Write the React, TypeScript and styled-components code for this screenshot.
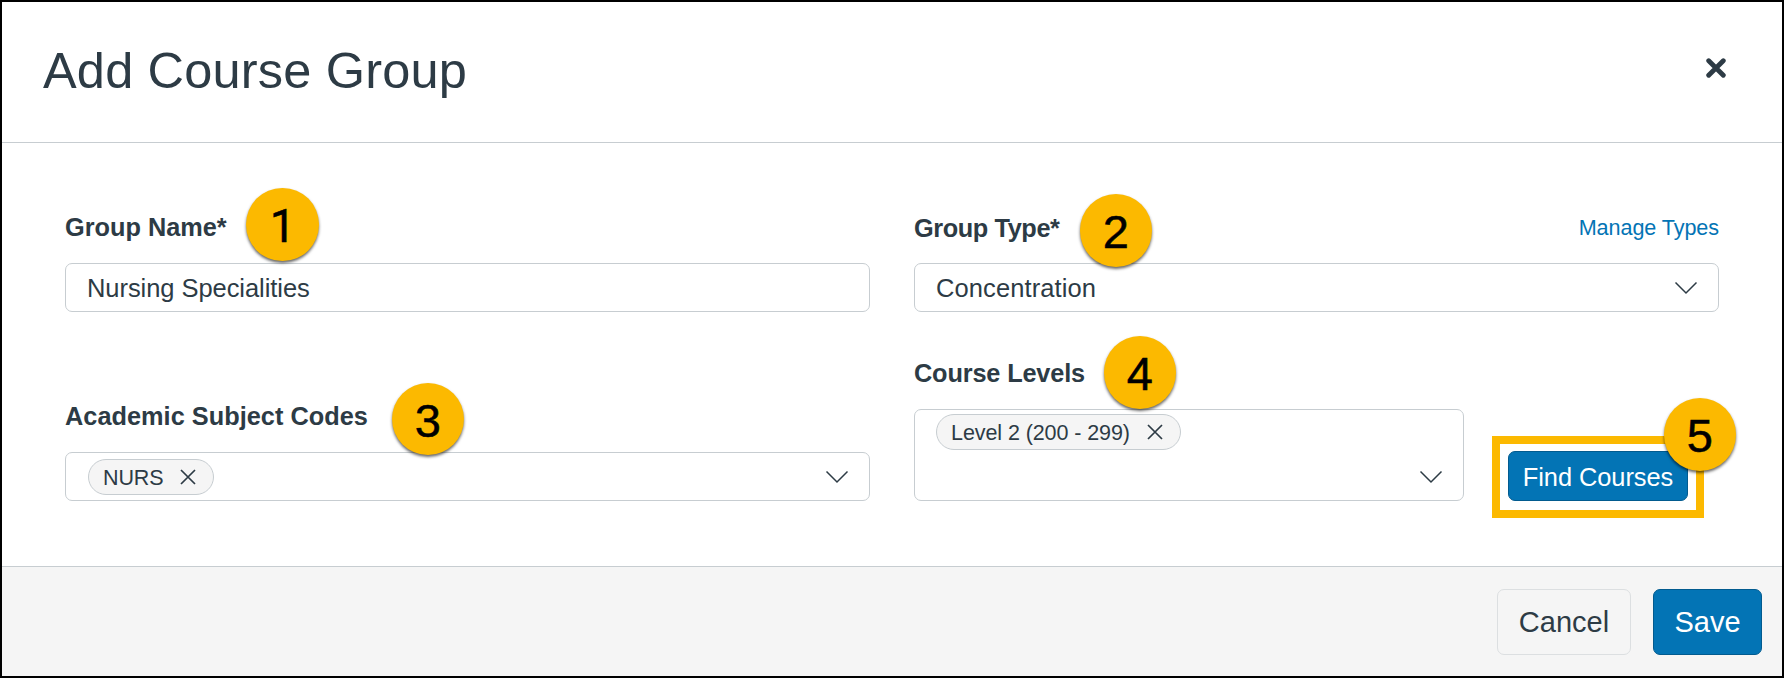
import React from "react";
import styled, { createGlobalStyle, css } from "styled-components";

const ink = "#2d3b45";
const line = "#c7cdd1";
const blue = "#0374b5";
const amber = "#fcb900";

const GlobalStyle = createGlobalStyle`
  *, *::before, *::after { box-sizing: border-box; }
  body { margin: 0; background: #fff; }
  button { font: inherit; cursor: pointer; }
`;

const Dialog = styled.div`
  width: 1784px;
  height: 678px;
  display: flex;
  flex-direction: column;
  border: 2px solid #000;
  background: #fff;
  color: ${ink};
  font-family: "Liberation Sans", Arial, sans-serif;
  white-space: nowrap;
`;

const Header = styled.header`
  height: 141px;
  flex: none;
  display: flex;
  justify-content: space-between;
  align-items: center;
  padding: 0 56px 8px 41px;
  border-bottom: 1px solid ${line};
`;

const Title = styled.h1`
  margin: 0;
  padding-top: 6px;
  font-size: 50.5px;
  line-height: 60px;
  font-weight: 400;
  letter-spacing: 0.18px;
`;

const CloseButton = styled.button`
  display: flex;
  padding: 0;
  border: 0;
  background: none;
  color: ${ink};
`;

const Form = styled.main`
  flex: 1;
  display: grid;
  grid-template-columns: 805px 805px;
  grid-template-rows: 49px 92px;
  row-gap: 97px;
  column-gap: 44px;
  padding: 120px 63px 0;
`;

const Field = styled.div<{ $width?: number }>`
  position: relative;
  display: flex;
  flex-direction: column;
  justify-content: flex-end;
  width: ${(p) => (p.$width ? `${p.$width}px` : "auto")};
`;

const LabelRow = styled.div<{ $gap: number }>`
  display: flex;
  justify-content: space-between;
  height: 30px;
  margin-bottom: ${(p) => p.$gap}px;
`;

const Label = styled.label<{ $tracking?: number }>`
  font-size: 25.3px;
  line-height: 30px;
  font-weight: 700;
  letter-spacing: ${(p) => p.$tracking ?? 0}px;
`;

const Link = styled.a`
  color: ${blue};
  font-size: 21.6px;
  line-height: 30px;
  letter-spacing: -0.08px;
`;

const Control = styled.div<{ $tall?: boolean }>`
  flex: none;
  display: flex;
  justify-content: space-between;
  align-items: center;
  height: 49px;
  padding: 0 20px 0 21px;
  border: 1px solid ${line};
  border-radius: 7px;
  background: #fff;
  font-size: 25.5px;
  line-height: 47px;
  ${(p) =>
    p.$tall &&
    css`
      height: 92px;
      align-items: stretch;
      padding-top: 4px;
    `}
`;

const ChevronSlot = styled.span<{ $low?: boolean }>`
  display: flex;
  align-self: ${(p) => (p.$low ? "flex-end" : "center")};
  margin-bottom: ${(p) => (p.$low ? 16 : 0)}px;
`;

const Chip = styled.span<{ $tracking?: number; $inset?: number }>`
  height: 36px;
  display: inline-flex;
  align-items: center;
  gap: ${(p) => 17 - (p.$inset ?? 0)}px;
  margin-left: ${(p) => p.$inset ?? 0}px;
  padding: 0 17px 0 14px;
  border: 1px solid ${line};
  border-radius: 18px;
  background: #f5f5f5;
  font-size: 21.5px;
  letter-spacing: ${(p) => p.$tracking ?? 0}px;
`;

const ChipText = styled.span`
  padding-top: 2px;
  line-height: 32px;
`;

const ControlText = styled.span<{ $tracking?: number }>`
  padding-top: 2px;
  line-height: 45px;
  letter-spacing: ${(p) => p.$tracking ?? 0}px;
`;

const LevelsRow = styled.div`
  display: flex;
  align-items: flex-end;
  justify-content: space-between;
  padding-right: 31px;
`;

const Button = styled.button<{ $primary?: boolean; $large?: boolean }>`
  height: ${(p) => (p.$large ? 66 : 50)}px;
  padding: 0;
  border: 1px solid ${(p) => (p.$primary ? "#025b8f" : "#dcdfe1")};
  border-radius: 7px;
  background: ${(p) => (p.$primary ? blue : "#f5f5f5")};
  color: ${(p) => (p.$primary ? "#fff" : ink)};
  font-size: ${(p) => (p.$large ? 29 : 25.4)}px;
  line-height: 1;
`;

const FindButton = styled(Button)`
  width: 180px;
  padding-top: 3px;
  letter-spacing: -0.05px;
`;
const CancelButton = styled(Button)`
  width: 134px;
`;
const SaveButton = styled(Button)`
  width: 109px;
`;

const Highlight = styled.div`
  position: relative;
  padding: 7px 8px 9px;
  border: 8px solid ${amber};
  margin: 0 -16px -17px 0;
  display: flex;
`;

const Marker = styled.span<{ $x: number; $y: number; $plainOne?: boolean }>`
  position: absolute;
  z-index: 1;
  left: ${(p) => p.$x}px;
  top: ${(p) => p.$y}px;
  width: 72.5px;
  height: 72.5px;
  border-radius: 50%;
  background: ${amber};
  box-shadow: 0 2px 3px rgba(0, 0, 0, 0.6);
  color: #000;
  font-size: 47px;
  line-height: 76px;
  text-align: center;
  -webkit-text-stroke: 0.5px #000;
  ${(p) =>
    p.$plainOne &&
    css`
      font-family: Roboto, sans-serif;
      font-size: 46px;
      text-indent: 1px;
    `}
`;

const Footer = styled.footer`
  flex: none;
  height: 110px;
  display: flex;
  justify-content: flex-end;
  gap: 22px;
  padding: 22px 20px 0;
  border-top: 1px solid ${line};
  background: #f5f5f5;
`;

const Chevron = () => (
  <svg width="24" height="14" viewBox="0 0 24 14" fill="none" stroke={ink} strokeWidth="1.5">
    <path d="M1.5 1.5 12 12 22.5 1.5" />
  </svg>
);

const RemoveIcon = () => (
  <svg width="16" height="16" viewBox="0 0 16 16" fill="none" stroke={ink} strokeWidth="1.7">
    <path d="M1 1 15 15M15 1 1 15" />
  </svg>
);

const CloseIcon = () => (
  <svg
    width="20"
    height="20"
    viewBox="0 0 20 20"
    fill="none"
    stroke={ink}
    strokeWidth="4.8"
    strokeLinecap="round"
  >
    <path d="M2.7 2.7 17.3 17.3M17.3 2.7 2.7 17.3" />
  </svg>
);

export default function App() {
  return (
    <>
      <GlobalStyle />
      <Dialog role="dialog">
        <Header>
          <Title>Add Course Group</Title>
          <CloseButton aria-label="Close">
            <CloseIcon />
          </CloseButton>
        </Header>
        <Form>
          <Field>
            <LabelRow $gap={21}>
              <Label>Group Name*</Label>
            </LabelRow>
            <Control>
              <ControlText $tracking={-0.06}>Nursing Specialities</ControlText>
            </Control>
            <Marker $x={181} $y={-75} $plainOne>1</Marker>
          </Field>
          <Field>
            <LabelRow $gap={20}>
              <Label $tracking={-0.4}>Group Type*</Label>
              <Link>Manage Types</Link>
            </LabelRow>
            <Control>
              <ControlText $tracking={0.1}>Concentration</ControlText>
              <Chevron />
            </Control>
            <Marker $x={165.5} $y={-69}>2</Marker>
          </Field>
          <Field>
            <LabelRow $gap={21}>
              <Label $tracking={0.03}>Academic Subject Codes</Label>
            </LabelRow>
            <Control>
              <Chip $tracking={-0.1} $inset={1}>
                <ChipText>NURS</ChipText>
                <RemoveIcon />
              </Chip>
              <ChevronSlot>
                <Chevron />
              </ChevronSlot>
            </Control>
            <Marker $x={326.5} $y={-26.5}>3</Marker>
          </Field>
          <LevelsRow>
            <Field $width={550}>
              <LabelRow $gap={21}>
                <Label $tracking={-0.15}>Course Levels</Label>
              </LabelRow>
              <Control $tall>
                <Chip $tracking={-0.08}>
                  <ChipText>Level 2 (200 - 299)</ChipText>
                  <RemoveIcon />
                </Chip>
                <ChevronSlot $low>
                  <Chevron />
                </ChevronSlot>
              </Control>
              <Marker $x={189.5} $y={-22}>4</Marker>
            </Field>
            <Highlight>
              <FindButton $primary>Find Courses</FindButton>
              <Marker $x={163.5} $y={-46}>5</Marker>
            </Highlight>
          </LevelsRow>
        </Form>
        <Footer>
          <CancelButton $large>Cancel</CancelButton>
          <SaveButton $primary $large>Save</SaveButton>
        </Footer>
      </Dialog>
    </>
  );
}
